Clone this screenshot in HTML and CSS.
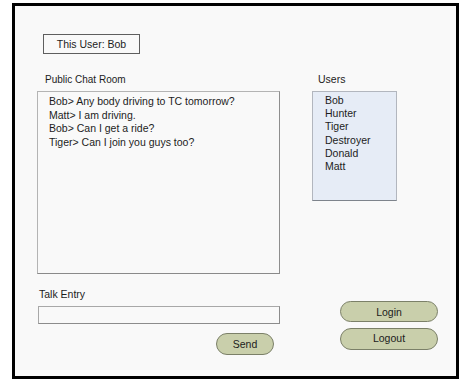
FILE: index.html
```html
<!DOCTYPE html>
<html lang="en">
<head>
  <meta charset="UTF-8">
  <meta name="viewport" content="width=device-width, initial-scale=1.0">
  <title>Public Chat Room</title>
  <link rel="stylesheet" href="styles.css">
</head>
<body>
  <div class="frame">
    <div class="this-user">This User: Bob</div>

    <div class="main-row">
      <div class="chat-col">
        <div class="label chat-label">Public Chat Room</div>
        <div class="chat-box">
          <div>Bob&gt; Any body driving to TC tomorrow?</div>
          <div>Matt&gt; I am driving.</div>
          <div>Bob&gt; Can I get a ride?</div>
          <div>Tiger&gt; Can I join you guys too?</div>
        </div>
      </div>
      <div class="users-col">
        <div class="label users-label">Users</div>
        <ul class="user-list">
          <li>Bob</li>
          <li>Hunter</li>
          <li>Tiger</li>
          <li>Destroyer</li>
          <li>Donald</li>
          <li>Matt</li>
        </ul>
      </div>
    </div>

    <div class="bottom-row">
      <div class="entry-col">
        <label class="label entry-label" for="talk">Talk Entry</label>
        <input type="text" id="talk" class="talk-input">
        <button class="pill send-btn">Send</button>
      </div>
      <div class="auth-col">
        <button class="pill auth-btn">Login</button>
        <button class="pill auth-btn logout">Logout</button>
      </div>
    </div>
  </div>
</body>
</html>
```

FILE: styles.css
```css
* {
  margin: 0;
  padding: 0;
  box-sizing: border-box;
}

body {
  background: #fff;
  font-family: 'Liberation Sans', Arial, sans-serif;
  font-size: 10.5px;
  color: #1c1c1c;
}

.frame {
  margin: 3px 0 0 12px;
  width: 447px;
  height: 376px;
  border: 3px solid #000;
  background: #f9f9f9;
  padding: 28px 0 0 22px;
}

.this-user {
  margin-left: 6px;
  width: 97px;
  height: 20px;
  line-height: 18px;
  border: 1px solid #5e5e5e;
  text-align: center;
}

.label {
  display: block;
  height: 13px;
  line-height: 13px;
  margin-bottom: 5px;
}

.main-row {
  display: flex;
  margin-top: 19px;
}

.chat-col {
  width: 243px;
}

.chat-label {
  padding-left: 8px;
  font-size: 10px;
}

.chat-box {
  height: 183px;
  border: 1px solid #b4b4b4;
  border-right-color: #8e8e8e;
  border-bottom-color: #8a8a8a;
  background: #f9f9f9;
  padding: 3px 0 0 11px;
  line-height: 13.6px;
}

.users-col {
  margin-left: 32px;
}

.users-label {
  padding-left: 6px;
}

.user-list {
  list-style: none;
  width: 85px;
  height: 110px;
  background: #e6ecf6;
  border: 1px solid #b2b6be;
  border-bottom-color: #7e848c;
  padding: 2px 0 0 12px;
  line-height: 13.2px;
}

.bottom-row {
  display: flex;
  align-items: flex-start;
  margin-top: 14px;
}

.entry-col {
  width: 243px;
}

.entry-label {
  padding-left: 2px;
}

.talk-input {
  display: block;
  margin-left: 1px;
  width: 242px;
  height: 18px;
  border: 1px solid #a8a8a8;
  border-right-color: #8c8c8c;
  border-bottom-color: #8c8c8c;
  background: #f9f9f9;
  outline: none;
}

.pill {
  display: block;
  font-family: inherit;
  font-size: 10.5px;
  color: #1c1c1c;
  background: #c9cfab;
  border: 1px solid #7b8068;
  border-radius: 11px;
  cursor: pointer;
}

.send-btn {
  margin: 9px 0 0 179px;
  width: 58px;
  height: 22px;
}

.auth-col {
  margin: 13px 0 0 60px;
}

.auth-btn {
  width: 98px;
  height: 21px;
}

.auth-btn.logout {
  margin-top: 6px;
  height: 22px;
  padding-bottom: 2px;
}
```
